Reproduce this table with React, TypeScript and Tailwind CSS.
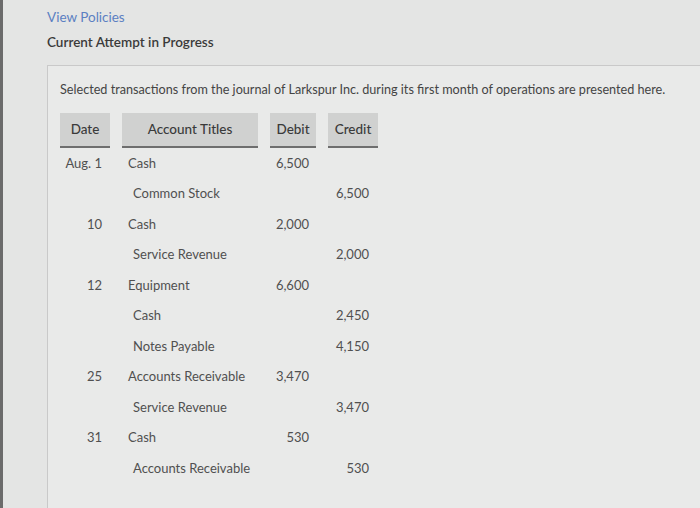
const rows: { date: string; title: string; indent: boolean; debit: string; credit: string }[] = [
  { date: 'Aug. 1', title: 'Cash', indent: false, debit: '6,500', credit: '' },
  { date: '', title: 'Common Stock', indent: true, debit: '', credit: '6,500' },
  { date: '10', title: 'Cash', indent: false, debit: '2,000', credit: '' },
  { date: '', title: 'Service Revenue', indent: true, debit: '', credit: '2,000' },
  { date: '12', title: 'Equipment', indent: false, debit: '6,600', credit: '' },
  { date: '', title: 'Cash', indent: true, debit: '', credit: '2,450' },
  { date: '', title: 'Notes Payable', indent: true, debit: '', credit: '4,150' },
  { date: '25', title: 'Accounts Receivable', indent: false, debit: '3,470', credit: '' },
  { date: '', title: 'Service Revenue', indent: true, debit: '', credit: '3,470' },
  { date: '31', title: 'Cash', indent: false, debit: '530', credit: '' },
  { date: '', title: 'Accounts Receivable', indent: true, debit: '', credit: '530' },
];

export default function App() {
  return (
    <div
      className="flex h-[508px] w-[700px] overflow-hidden bg-[#e4e5e4] text-[#505050]"
      style={{ fontFamily: 'Lato, "Open Sans", sans-serif' }}
    >
      <div className="w-[3px] bg-[#6b6b6b]" />
      <div className="flex flex-1 flex-col pl-[44px] pt-[8px]">
        <a className="text-[13.5px] leading-[18px] text-[#5b80c2]">View Policies</a>
        <h2 className="mt-[7px] text-[13.5px] font-semibold leading-[18px] text-[#3a3a3a]">
          Current Attempt in Progress
        </h2>

        <div className="mt-[14px] flex-1 border-l border-t border-[#c9c9c9] bg-[#e9eae9] pl-[12px] pt-[14px]">
          <p className="text-[12.65px] leading-[20px] text-[#444]">
            Selected transactions from the journal of Larkspur Inc. during its first month of operations are presented here.
          </p>

          <div className="mt-[13px] grid w-max grid-cols-[50px_136px_46px_50px] gap-x-3 text-[13px]">
            {['Date', 'Account Titles', 'Debit', 'Credit'].map((h) => (
              <div
                key={h}
                className="flex h-[35px] items-center justify-center border-b-2 border-[#6e6e6e] bg-[#d0d1d0] text-[13.5px] font-medium text-[#3a3a3a]"
              >
                {h}
              </div>
            ))}
            {rows.map((r, i) => (
              <div key={i} className="contents">
                <div className="flex h-[30.5px] items-center justify-end pr-[8px]">{r.date}</div>
                <div className={`flex h-[30.5px] items-center ${r.indent ? 'pl-[11px]' : 'pl-[6px]'}`}>
                  {r.title}
                </div>
                <div className="flex h-[30.5px] items-center justify-end pr-[7px]">{r.debit}</div>
                <div className="flex h-[30.5px] items-center justify-end pr-[9px]">{r.credit}</div>
              </div>
            ))}
          </div>
        </div>
      </div>
    </div>
  );
}
